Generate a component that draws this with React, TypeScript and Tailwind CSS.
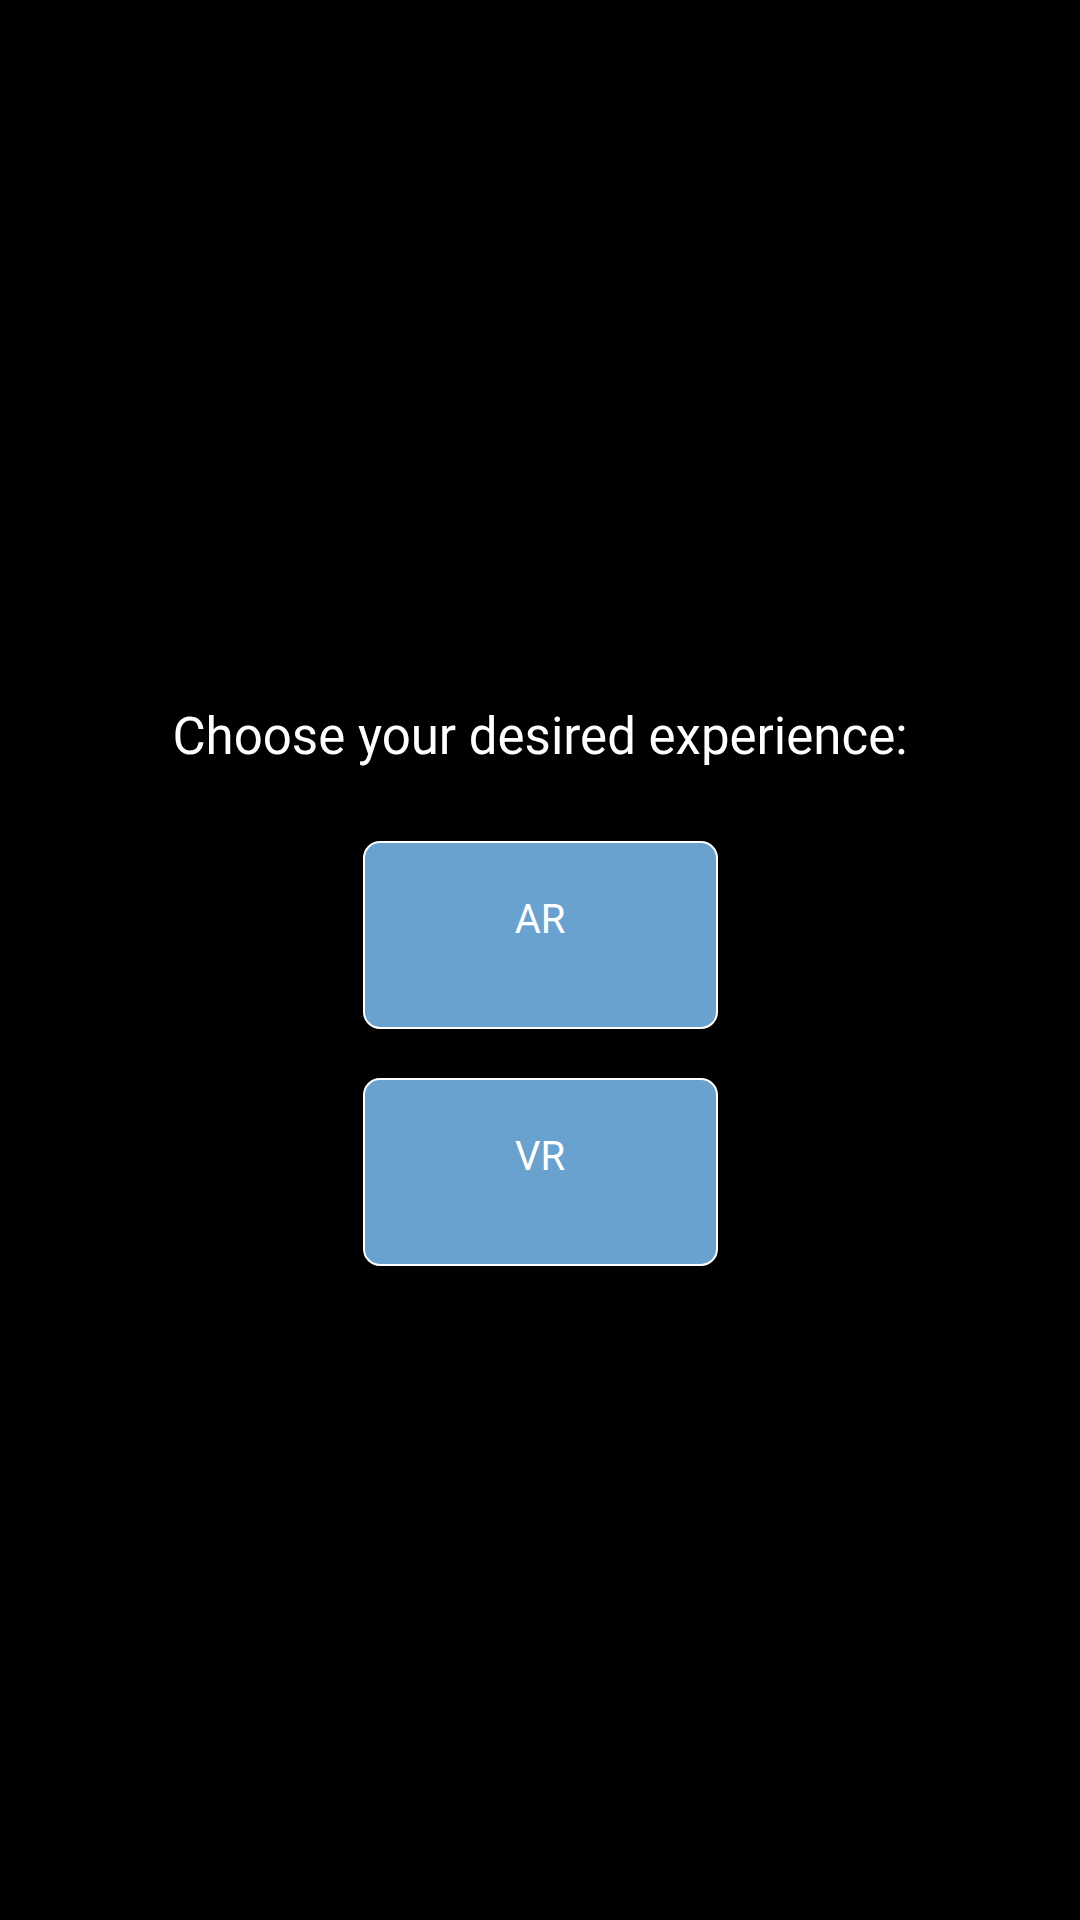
export default function App() {
  const options = ['AR', 'VR'];

  return (
    <div className="min-h-[1920px] w-[1080px] bg-black flex flex-col items-center pt-[711px] font-['Roboto',sans-serif] text-white">
      <h1 className="text-[51px] leading-none font-normal">Choose your desired experience:</h1>
      <div className="mt-[79px] flex flex-col gap-[49px]">
        {options.map(opt => (
          <button
            key={opt}
            className="w-[355px] h-[188px] rounded-[17px] border-2 border-white bg-[#69a1cf] flex justify-center items-start pt-[57px] text-[40px] leading-none text-white"
          >
            {opt}
          </button>
        ))}
      </div>
    </div>
  );
}
